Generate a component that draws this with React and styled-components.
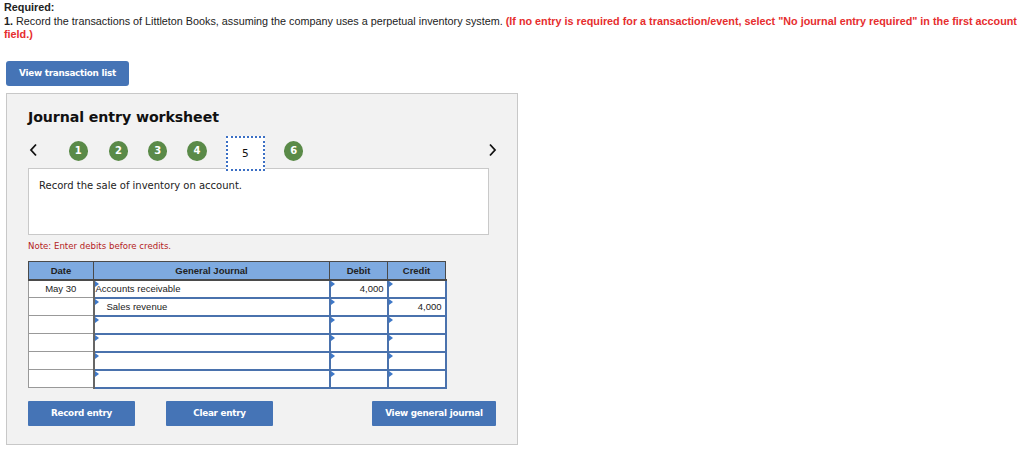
import React from 'react';
import styled, { createGlobalStyle } from 'styled-components';

const Global = createGlobalStyle`
  body {
    margin: 0;
    background: #fff;
    font-family: "Liberation Sans", Arial, sans-serif;
  }
`;

const Page = styled.div`
  padding: 1px 4px 0 4px;
  width: 1024px;
  box-sizing: border-box;
`;

const Intro = styled.div`
  font-size: 10.8px;
  line-height: 13.5px;
  color: #222;
`;

const Red = styled.b`
  color: #e62e2e;
`;

const BlueButton = styled.button`
  display: flex;
  align-items: center;
  justify-content: center;
  width: ${(p) => p.$w}px;
  height: 25px;
  border: none;
  border-radius: ${(p) => (p.$round ? 3 : 1)}px;
  background: #4574b6;
  color: #fff;
  font-family: "DejaVu Sans", Verdana, sans-serif;
  font-weight: bold;
  font-size: 8.8px;
  letter-spacing: -0.25px;
  padding: 0;
  margin-left: ${(p) => p.$ml || '0'};
  cursor: pointer;
`;

const TopButton = styled.div`
  margin: 19px 0 0 2px;
`;

const Panel = styled.div`
  margin: 7px 0 0 2px;
  width: 512px;
  height: 352px;
  box-sizing: border-box;
  background: #f2f2f2;
  border: 1px solid #c8c8c8;
  padding: 13px 0 0 21px;
`;

const Title = styled.h2`
  margin: 0;
  font-family: "DejaVu Sans", Verdana, sans-serif;
  font-size: 14.2px;
  font-weight: bold;
  color: #111;
  letter-spacing: -0.1px;
  line-height: 20px;
`;

const Nav = styled.div`
  display: flex;
  align-items: flex-start;
  height: 35px;
  margin-top: 9px;
  width: 470px;
`;

const Arrow = styled.span`
  display: flex;
  width: 12px;
  justify-content: center;
  margin-top: 7px;
  margin-left: ${(p) => p.$ml || 0}px;
`;

const Step = styled.span`
  width: 20px;
  height: 20px;
  margin-top: 5px;
  border-radius: 50%;
  background: #5a8a48;
  color: #fff;
  font-family: "DejaVu Sans", Verdana, sans-serif;
  font-weight: bold;
  font-size: 10px;
  display: flex;
  align-items: center;
  justify-content: center;
  margin-left: ${(p) => p.$ml}px;
`;

const Current = styled.span`
  width: 41px;
  height: 35px;
  box-sizing: border-box;
  border: 2px dotted #3b6fc4;
  background: #fff;
  font-family: "DejaVu Sans", Verdana, sans-serif;
  font-size: 10.5px;
  color: #111;
  display: flex;
  align-items: center;
  justify-content: center;
  margin-left: ${(p) => p.$ml}px;
`;

const Desc = styled.div`
  width: 461px;
  height: 67px;
  box-sizing: border-box;
  background: #fff;
  border: 1px solid #c9c9c9;
  padding: 11px 10px;
  font-family: "DejaVu Sans", Verdana, sans-serif;
  font-size: 10px;
  color: #222;
  margin-top: -3px;
`;

const Note = styled.div`
  font-family: "DejaVu Sans", Verdana, sans-serif;
  font-size: 8.6px;
  color: #b42323;
  margin-top: 6px;
  height: 18px;
`;

const Table = styled.table`
  border-collapse: collapse;
  margin-top: 2px;
  table-layout: fixed;
  width: 413px;
  font-family: "Liberation Sans", Arial, sans-serif;
  font-size: 9.5px;
  color: #222;
`;

const Th = styled.th`
  width: ${(p) => p.$w}px;
  height: 17px;
  padding: 0;
  background: #7eaae0;
  border: 1px solid #4a4a4a;
  border-bottom-width: 2px;
  font-weight: bold;
  font-size: 9.5px;
  color: #222;
`;

const DateCell = styled.td`
  height: 16px;
  padding: 0;
  text-align: center;
  vertical-align: middle;
  background: #fff;
  border: 1px solid #999;
  border-right: 2px solid #666;
`;

const InputCell = styled.td`
  position: relative;
  height: 16px;
  padding: 0 3px 0 ${(p) => (p.$indent ? 12 : 1)}px;
  background: #fff;
  border: 2px solid #4a72ad;
  text-align: ${(p) => (p.$right ? 'right' : 'left')};
  white-space: nowrap;
  line-height: 13px;
  vertical-align: middle;
`;

const Corner = styled.span`
  position: absolute;
  left: 0;
  top: 0;
  width: 0;
  height: 0;
  border-top: 3px solid transparent;
  border-bottom: 3px solid transparent;
  border-left: 4px solid #3e78c8;
`;

const Actions = styled.div`
  display: flex;
  gap: 31px;
  margin-top: 12px;
  width: 468px;
`;

const Chevron = ({ dir }) => (
  <svg width="9" height="14" viewBox="0 0 9 14">
    <path
      d={dir === 'left' ? 'M7 1.5 L2 7 L7 12.5' : 'M2 1.5 L7 7 L2 12.5'}
      fill="none"
      stroke="#111"
      strokeWidth="1.8"
    />
  </svg>
);

const rows = [
  { date: 'May 30', account: 'Accounts receivable', debit: '4,000', credit: '' },
  { date: '', account: 'Sales revenue', indent: true, debit: '', credit: '4,000' },
  { date: '', account: '', debit: '', credit: '' },
  { date: '', account: '', debit: '', credit: '' },
  { date: '', account: '', debit: '', credit: '' },
  { date: '', account: '', debit: '', credit: '' },
];

function App() {
  return (
    <Page>
      <Global />
      <Intro>
        <b>Required:</b>
        <br />
        <b>1.</b> Record the transactions of Littleton Books, assuming the company uses a perpetual
        inventory system.{' '}
        <Red>
          (If no entry is required for a transaction/event, select "No journal entry required" in the
          first account field.)
        </Red>
      </Intro>
      <TopButton>
        <BlueButton $w={123} $round>
          View transaction list
        </BlueButton>
      </TopButton>
      <Panel>
        <Title>Journal entry worksheet</Title>
        <Nav>
          <Arrow $ml={0}>
            <Chevron dir="left" />
          </Arrow>
          <Step $ml={29}>1</Step>
          <Step $ml={21}>2</Step>
          <Step $ml={20}>3</Step>
          <Step $ml={20}>4</Step>
          <Current $ml={19}>5</Current>
          <Step $ml={19}>6</Step>
          <Arrow $ml={183}>
            <Chevron dir="right" />
          </Arrow>
        </Nav>
        <Desc>Record the sale of inventory on account.</Desc>
        <Note>Note: Enter debits before credits.</Note>
        <Table>
          <thead>
            <tr>
              <Th $w={64}>Date</Th>
              <Th $w={235}>General Journal</Th>
              <Th $w={57}>Debit</Th>
              <Th $w={57}>Credit</Th>
            </tr>
          </thead>
          <tbody>
            {rows.map((r, i) => (
              <tr key={i}>
                <DateCell>{r.date}</DateCell>
                <InputCell $indent={r.indent}>
                  <Corner />
                  {r.account}
                </InputCell>
                <InputCell $right>
                  <Corner />
                  {r.debit}
                </InputCell>
                <InputCell $right>
                  <Corner />
                  {r.credit}
                </InputCell>
              </tr>
            ))}
          </tbody>
        </Table>
        <Actions>
          <BlueButton $w={107}>Record entry</BlueButton>
          <BlueButton $w={107}>Clear entry</BlueButton>
          <BlueButton $w={124} $ml="auto">
            View general journal
          </BlueButton>
        </Actions>
      </Panel>
    </Page>
  );
}

export default App;
